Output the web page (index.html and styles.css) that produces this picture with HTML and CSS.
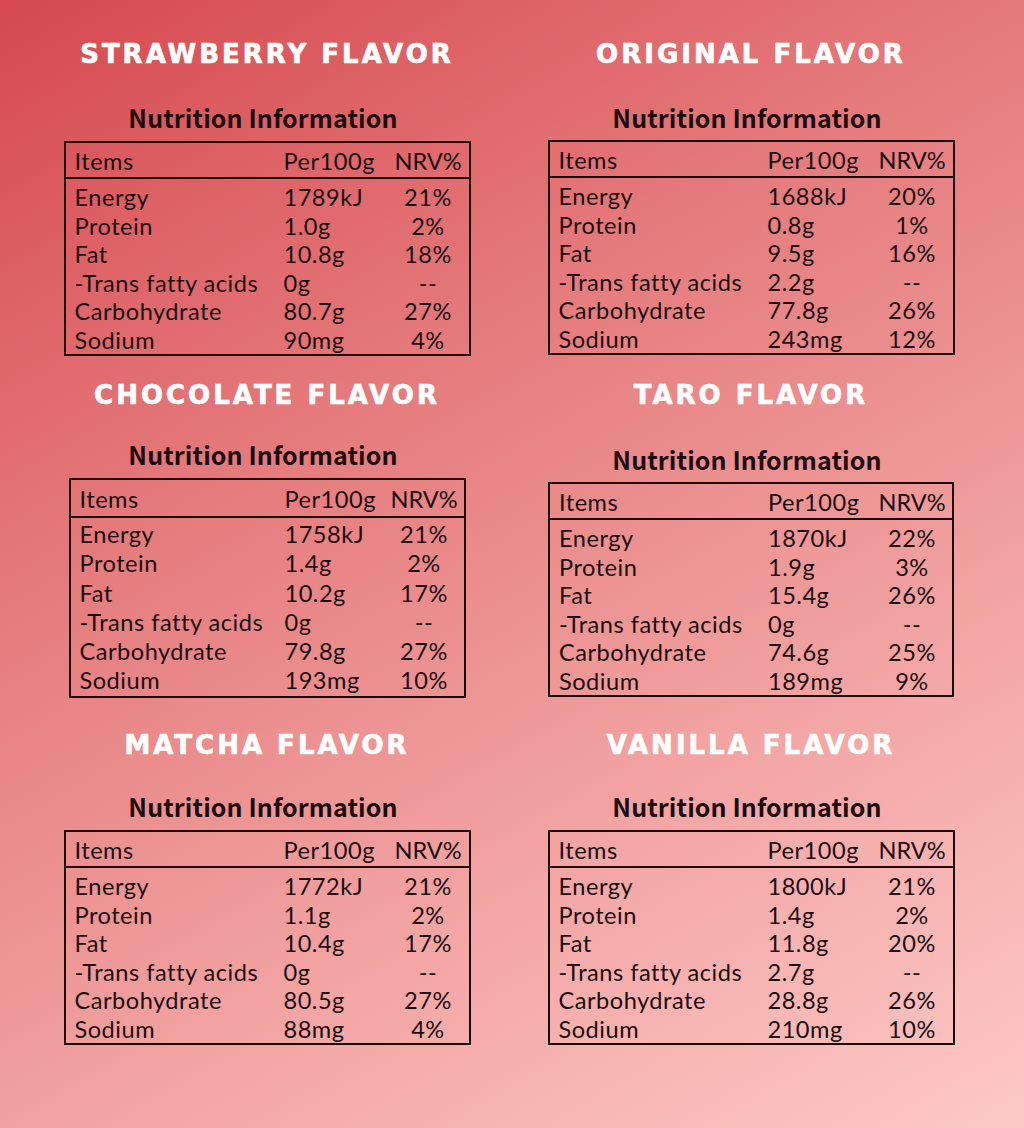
FILE: index.html
```html
<!DOCTYPE html>
<html lang="en">
<head>
<meta charset="utf-8">
<title>Nutrition Information</title>
<link rel="stylesheet" href="styles.css">
</head>
<body>
<main class="sheet">

  <section class="panel panel--top">
    <h2 class="flavor">STRAWBERRY FLAVOR</h2>
    <h3 class="ni">Nutrition Information</h3>
    <div class="facts">
      <div class="facts__head"><span>Items</span><span>Per100g</span><span class="nrv">NRV%</span></div>
      <div class="facts__body">
        <div class="facts__row"><span>Energy</span><span>1789kJ</span><span class="nrv">21%</span></div>
        <div class="facts__row"><span>Protein</span><span>1.0g</span><span class="nrv">2%</span></div>
        <div class="facts__row"><span>Fat</span><span>10.8g</span><span class="nrv">18%</span></div>
        <div class="facts__row"><span>-Trans fatty acids</span><span>0g</span><span class="nrv">--</span></div>
        <div class="facts__row"><span>Carbohydrate</span><span>80.7g</span><span class="nrv">27%</span></div>
        <div class="facts__row"><span>Sodium</span><span>90mg</span><span class="nrv">4%</span></div>
      </div>
    </div>
  </section>

  <section class="panel panel--top">
    <h2 class="flavor">ORIGINAL FLAVOR</h2>
    <h3 class="ni ni--tight">Nutrition Information</h3>
    <div class="facts">
      <div class="facts__head"><span>Items</span><span>Per100g</span><span class="nrv">NRV%</span></div>
      <div class="facts__body">
        <div class="facts__row"><span>Energy</span><span>1688kJ</span><span class="nrv">20%</span></div>
        <div class="facts__row"><span>Protein</span><span>0.8g</span><span class="nrv">1%</span></div>
        <div class="facts__row"><span>Fat</span><span>9.5g</span><span class="nrv">16%</span></div>
        <div class="facts__row"><span>-Trans fatty acids</span><span>2.2g</span><span class="nrv">--</span></div>
        <div class="facts__row"><span>Carbohydrate</span><span>77.8g</span><span class="nrv">26%</span></div>
        <div class="facts__row"><span>Sodium</span><span>243mg</span><span class="nrv">12%</span></div>
      </div>
    </div>
  </section>

  <section class="panel panel--mid">
    <h2 class="flavor">CHOCOLATE FLAVOR</h2>
    <h3 class="ni ni--choc">Nutrition Information</h3>
    <div class="facts facts--choc">
      <div class="facts__head"><span>Items</span><span>Per100g</span><span class="nrv">NRV%</span></div>
      <div class="facts__body">
        <div class="facts__row"><span>Energy</span><span>1758kJ</span><span class="nrv">21%</span></div>
        <div class="facts__row"><span>Protein</span><span>1.4g</span><span class="nrv">2%</span></div>
        <div class="facts__row"><span>Fat</span><span>10.2g</span><span class="nrv">17%</span></div>
        <div class="facts__row"><span>-Trans fatty acids</span><span>0g</span><span class="nrv">--</span></div>
        <div class="facts__row"><span>Carbohydrate</span><span>79.8g</span><span class="nrv">27%</span></div>
        <div class="facts__row"><span>Sodium</span><span>193mg</span><span class="nrv">10%</span></div>
      </div>
    </div>
  </section>

  <section class="panel panel--mid">
    <h2 class="flavor">TARO FLAVOR</h2>
    <h3 class="ni ni--taro">Nutrition Information</h3>
    <div class="facts facts--taro">
      <div class="facts__head"><span>Items</span><span>Per100g</span><span class="nrv">NRV%</span></div>
      <div class="facts__body">
        <div class="facts__row"><span>Energy</span><span>1870kJ</span><span class="nrv">22%</span></div>
        <div class="facts__row"><span>Protein</span><span>1.9g</span><span class="nrv">3%</span></div>
        <div class="facts__row"><span>Fat</span><span>15.4g</span><span class="nrv">26%</span></div>
        <div class="facts__row"><span>-Trans fatty acids</span><span>0g</span><span class="nrv">--</span></div>
        <div class="facts__row"><span>Carbohydrate</span><span>74.6g</span><span class="nrv">25%</span></div>
        <div class="facts__row"><span>Sodium</span><span>189mg</span><span class="nrv">9%</span></div>
      </div>
    </div>
  </section>

  <section class="panel panel--bottom">
    <h2 class="flavor">MATCHA FLAVOR</h2>
    <h3 class="ni ni--low">Nutrition Information</h3>
    <div class="facts">
      <div class="facts__head"><span>Items</span><span>Per100g</span><span class="nrv">NRV%</span></div>
      <div class="facts__body">
        <div class="facts__row"><span>Energy</span><span>1772kJ</span><span class="nrv">21%</span></div>
        <div class="facts__row"><span>Protein</span><span>1.1g</span><span class="nrv">2%</span></div>
        <div class="facts__row"><span>Fat</span><span>10.4g</span><span class="nrv">17%</span></div>
        <div class="facts__row"><span>-Trans fatty acids</span><span>0g</span><span class="nrv">--</span></div>
        <div class="facts__row"><span>Carbohydrate</span><span>80.5g</span><span class="nrv">27%</span></div>
        <div class="facts__row"><span>Sodium</span><span>88mg</span><span class="nrv">4%</span></div>
      </div>
    </div>
  </section>

  <section class="panel panel--bottom">
    <h2 class="flavor">VANILLA FLAVOR</h2>
    <h3 class="ni ni--low">Nutrition Information</h3>
    <div class="facts">
      <div class="facts__head"><span>Items</span><span>Per100g</span><span class="nrv">NRV%</span></div>
      <div class="facts__body">
        <div class="facts__row"><span>Energy</span><span>1800kJ</span><span class="nrv">21%</span></div>
        <div class="facts__row"><span>Protein</span><span>1.4g</span><span class="nrv">2%</span></div>
        <div class="facts__row"><span>Fat</span><span>11.8g</span><span class="nrv">20%</span></div>
        <div class="facts__row"><span>-Trans fatty acids</span><span>2.7g</span><span class="nrv">--</span></div>
        <div class="facts__row"><span>Carbohydrate</span><span>28.8g</span><span class="nrv">26%</span></div>
        <div class="facts__row"><span>Sodium</span><span>210mg</span><span class="nrv">10%</span></div>
      </div>
    </div>
  </section>

</main>
</body>
</html>
```
FILE: styles.css
```css
* { box-sizing: border-box; }

html, body {
  margin: 0;
  padding: 0;
}

body {
  width: 1024px;
  height: 1128px;
  overflow: hidden;
  background: linear-gradient(150deg, #d5494f 0%, #e57a7c 35%, #f2a4a3 68%, #fdc9c6 100%);
  color: #1d0b0c;
  font-family: Lato, "Noto Sans", sans-serif;
}

.sheet {
  display: grid;
  grid-template-columns: 484px 484px;
  grid-template-rows: 355px 343px 430px;
  padding: 0 26px 0 25px;
}

.panel {
  display: flex;
  flex-direction: column;
  align-items: center;
}

.panel--top { padding-top: 39px; }
.panel--mid { padding-top: 25px; }
.panel--bottom { padding-top: 32px; }

.flavor {
  margin: 0;
  height: 30px;
  font-family: "DejaVu Sans", sans-serif;
  font-weight: 700;
  font-size: 26px;
  line-height: 30px;
  letter-spacing: 3px;
  color: #ffffff;
  -webkit-text-stroke: 0.7px #ffffff;
  white-space: nowrap;
}

.ni {
  margin: 33px 8px 9px 0;
  height: 30px;
  font-family: "Noto Sans CJK SC", "Noto Sans", sans-serif;
  font-weight: 700;
  font-size: 25px;
  line-height: 30px;
  letter-spacing: 0.1px;
  white-space: nowrap;
}

.ni--tight { margin-bottom: 8px; }
.ni--choc { margin-top: 29px; margin-bottom: 9px; }
.ni--taro { margin-top: 34px; margin-bottom: 8px; }
.ni--low { margin-top: 31px; margin-bottom: 9px; }

.facts {
  --c1: 209px;
  --c2: 110px;
  --pr: 6px;
  --lh: 28.5px;
  width: 407px;
  border: 2px solid #1d0b0c;
  font-family: Lato, "Noto Sans", sans-serif;
  font-size: 23.6px;
  font-weight: 400;
  letter-spacing: 0.5px;
  line-height: var(--lh);
}

.facts--choc {
  --c1: 205px;
  --c2: 106px;
  --pr: 6px;
  --lh: 29.3px;
  width: 397px;
}

.facts--taro {
  width: 406px;
}

.facts__head,
.facts__row {
  display: grid;
  grid-template-columns: var(--c1) var(--c2) 1fr;
  white-space: nowrap;
}

.facts__head {
  padding: 4px var(--pr) 1.5px 9px;
  border-bottom: 2px solid #1d0b0c;
}

.facts__head .nrv {
  letter-spacing: 0;
}

.facts--choc .facts__head {
  line-height: 30px;
  padding-bottom: 2px;
}

.facts__body {
  padding: 4px var(--pr) 0 9px;
}

.facts--choc .facts__body {
  padding-top: 2px;
}

.nrv {
  text-align: center;
}
```
